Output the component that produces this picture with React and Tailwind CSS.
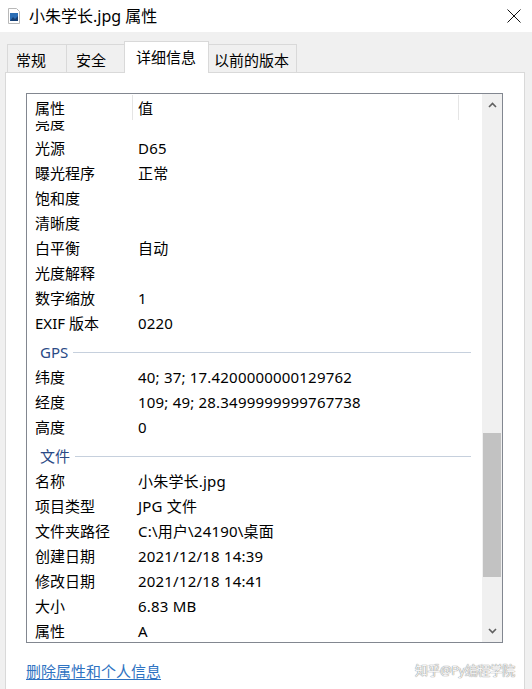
import React from "react";

const rows1 = [
  ["亮度", ""],
  ["光源", "D65"],
  ["曝光程序", "正常"],
  ["饱和度", ""],
  ["清晰度", ""],
  ["白平衡", "自动"],
  ["光度解释", ""],
  ["数字缩放", "1"],
  ["EXIF 版本", "0220"],
];
const gps = [
  ["纬度", "40; 37; 17.4200000000129762"],
  ["经度", "109; 49; 28.3499999999767738"],
  ["高度", "0"],
];
const file = [
  ["名称", "小朱学长.jpg"],
  ["项目类型", "JPG 文件"],
  ["文件夹路径", "C:\\用户\\24190\\桌面"],
  ["创建日期", "2021/12/18 14:39"],
  ["修改日期", "2021/12/18 14:41"],
  ["大小", "6.83 MB"],
  ["属性", "A"],
];

function Row({ name, value }) {
  return (
    <div className="flex h-[25px] items-center text-[15px] leading-[25px] text-black whitespace-nowrap">
      <div className="w-[111px] shrink-0 pl-[8px]">{name}</div>
      <div className="tracking-[0.2px]">{value}</div>
    </div>
  );
}

function Group({ label }) {
  return (
    <div className="flex h-[29px] items-center pl-[13px] pt-[3px]">
      <span className="text-[15px] leading-[20px] text-[#2a4a86]">{label}</span>
      <div className="ml-[5px] mr-[11px] h-px flex-1 bg-[#c6d0dd]" />
    </div>
  );
}

export default function App() {
  return (
    <div className="relative h-[689px] w-[532px] overflow-hidden bg-[#f0f0f0] font-['Noto_Sans','Noto_Sans_CJK_SC',sans-serif] text-black">
      {/* Title bar */}
      <div className="flex h-[32px] items-center bg-white">
        <svg className="ml-[7px]" width="14" height="16" viewBox="0 0 14 16">
          <path d="M1.5 0.5 H9.5 L12.5 3.5 V15.5 H1.5 Z" fill="#fff" stroke="#b8b8b8" />
          <rect x="3" y="5" width="8" height="8" fill="#2a6db5" />
          <path d="M3 13 L6 9 L8 11 L11 8 V13 Z" fill="#163f74" />
        </svg>
        <span className="ml-[8px] text-[16px] leading-[20px]">小朱学长.jpg 属性</span>
        <div className="flex-1" />
        <svg className="mr-[11px]" width="14" height="14" viewBox="0 0 14 14">
          <path d="M0.5 0.5 L13.5 13.5 M13.5 0.5 L0.5 13.5" stroke="#111" strokeWidth="1" />
        </svg>
      </div>

      {/* Tabs */}
      <div className="flex h-[40px] items-end pl-[7px] text-[15px] leading-[20px]">
        <div className="flex h-[28px] w-[59px] items-center border-l border-t border-[#d9d9d9] bg-[#f0f0f0] pl-[8px] pt-[2px]">
          常规
        </div>
        <div className="flex h-[28px] w-[58px] items-center border-l border-t border-[#d9d9d9] bg-[#f0f0f0] pl-[9px] pt-[2px]">
          安全
        </div>
        <div className="relative z-10 mb-[-1px] flex h-[32px] w-[85px] items-center border border-b-0 border-[#d9d9d9] bg-white pl-[11px] pb-[1px]">
          详细信息
        </div>
        <div className="flex h-[28px] w-[88px] items-center border-r border-t border-[#d9d9d9] bg-[#f0f0f0] pl-[5px] pt-[2px]">
          以前的版本
        </div>
      </div>

      {/* Panel */}
      <div className="ml-[5px] h-[640px] w-[520px] border border-[#d9d9d9] bg-white pl-[20px] pt-[20px]">
        {/* List box */}
        <div className="flex h-[550px] w-[477px] border border-[#828790] bg-white">
          <div className="flex min-w-0 flex-1 flex-col">
            {/* Header */}
            <div className="relative z-10 flex h-[27px] shrink-0 items-stretch bg-white text-[15px] leading-[20px]">
              <div className="flex w-[105px] items-center pl-[8px] pt-[1px]">属性</div>
              <div className="my-[1px] w-px bg-[#e5e5e5]" />
              <div className="flex w-[325px] items-center pl-[5px] pt-[1px]">值</div>
              <div className="my-[1px] w-px bg-[#e5e5e5]" />
            </div>
            {/* Content */}
            <div className="flex-1 overflow-hidden">
              <div className="mt-[-10px]">
                {rows1.map(([n, v]) => (
                  <Row key={n} name={n} value={v} />
                ))}
                <Group label="GPS" />
                {gps.map(([n, v]) => (
                  <Row key={n} name={n} value={v} />
                ))}
                <Group label="文件" />
                {file.map(([n, v]) => (
                  <Row key={n} name={n} value={v} />
                ))}
              </div>
            </div>
          </div>
          {/* Scrollbar */}
          <div className="flex w-[20px] shrink-0 flex-col bg-[#f0f0f0]">
            <div className="flex h-[22px] items-center justify-center">
              <svg width="9" height="6" viewBox="0 0 9 6">
                <path d="M1 5 L4.5 1.5 L8 5" fill="none" stroke="#606060" strokeWidth="1.6" />
              </svg>
            </div>
            <div className="h-[317px]" />
            <div className="mx-[1px] h-[144px] bg-[#c2c2c2]" />
            <div className="flex-1" />
            <div className="flex h-[22px] items-center justify-center">
              <svg width="9" height="6" viewBox="0 0 9 6">
                <path d="M1 1 L4.5 4.5 L8 1" fill="none" stroke="#606060" strokeWidth="1.6" />
              </svg>
            </div>
          </div>
        </div>

        {/* Link */}
        <div className="mt-[18px] text-[15px] leading-[20px]">
          <span className="text-[#2f73c2] underline underline-offset-2">删除属性和个人信息</span>
        </div>
      </div>

      {/* Watermark */}
      <div className="absolute left-[415px] top-[660px] whitespace-nowrap text-[13px] leading-[20px] tracking-[-0.5px] text-[#f4f4f4] [text-shadow:0_0_1px_#8a8a8a,0_0_1px_#8a8a8a]">
        知乎@Py编程学院
      </div>
    </div>
  );
}
